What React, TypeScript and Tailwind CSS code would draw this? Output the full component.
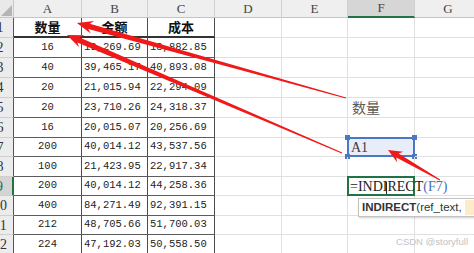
import React from "react";

// column widths of the sheet, A..G
const columns = [
  { key: "A", w: "w-[68px]" },
  { key: "B", w: "w-[66px]" },
  { key: "C", w: "w-[67px]" },
  { key: "D", w: "w-[67px]" },
  { key: "E", w: "w-[66px]" },
  { key: "F", w: "w-[67px]" },
  { key: "G", w: "w-[67px]" },
];

const rows = [
  ["数量", "金额", "成本"],
  ["16", "19,269.69", "18,882.85"],
  ["40", "39,465.17", "40,893.08"],
  ["20", "21,015.94", "22,294.09"],
  ["20", "23,710.26", "24,318.37"],
  ["16", "20,015.07", "20,256.69"],
  ["200", "40,014.12", "43,537.56"],
  ["100", "21,423.95", "22,917.34"],
  ["200", "40,014.12", "44,258.36"],
  ["400", "84,271.49", "92,391.15"],
  ["212", "48,705.66", "51,700.03"],
  ["224", "47,192.03", "50,558.50"],
];

const rowHeights = [20, 20, 20, 20, 20, 20, 19, 20, 19, 20, 19, 20];

// tapered arrow with swept-back barbs, tail -> tip
function arrowPoints(
  tx: number,
  ty: number,
  hx: number,
  hy: number,
  w0: number,
  w1: number,
  headLen: number,
  headW: number
) {
  const dx = hx - tx;
  const dy = hy - ty;
  const len = Math.hypot(dx, dy);
  const ux = dx / len;
  const uy = dy / len;
  const nx = -uy;
  const ny = ux;
  const bx = hx - ux * headLen;
  const by = hy - uy * headLen;
  const jx = hx - ux * headLen * 0.78;
  const jy = hy - uy * headLen * 0.78;
  const pts = [
    [tx + (nx * w0) / 2, ty + (ny * w0) / 2],
    [jx + (nx * w1) / 2, jy + (ny * w1) / 2],
    [bx + (nx * headW) / 2, by + (ny * headW) / 2],
    [hx, hy],
    [bx - (nx * headW) / 2, by - (ny * headW) / 2],
    [jx - (nx * w1) / 2, jy - (ny * w1) / 2],
    [tx - (nx * w0) / 2, ty - (ny * w0) / 2],
  ];
  return pts.map((p) => `${p[0].toFixed(1)},${p[1].toFixed(1)}`).join(" ");
}

function Arrows() {
  return (
    <svg
      className="absolute inset-0 z-30 pointer-events-none"
      width={474}
      height={253}
      viewBox="0 0 474 253"
    >
      <polygon points={arrowPoints(346, 98, 77, 23, 0.8, 5.5, 16, 13)} fill="#f01818" />
      <polygon points={arrowPoints(342, 153, 67, 35, 0.8, 5.5, 16, 13)} fill="#f01818" />
      <polygon points={arrowPoints(440, 180, 388, 150, 1, 4.5, 14, 12)} fill="#f01818" />
    </svg>
  );
}

function HeaderRow() {
  return (
    <div className="flex h-[18px]">
      <div className="relative w-[27px] -ml-[13px] shrink-0 bg-[#e9e9e9] border-r border-b border-[#c8c8c8]">
        <div className="absolute right-[1px] bottom-[1px] w-0 h-0 border-l-[11px] border-l-transparent border-b-[11px] border-b-[#b5b5b5]" />
      </div>
      {columns.map((c) => (
        <div
          key={c.key}
          className={`${c.w} shrink-0 flex items-center justify-center font-['Liberation_Serif',serif] text-[13px] text-[#444] border-r border-[#d0d0d0] ${
            c.key === "F"
              ? "bg-[#d6d6d6] border-b-2 border-b-[#217346]"
              : "bg-[#efefef] border-b border-b-[#c4c4c4]"
          }`}
        >
          {c.key}
        </div>
      ))}
    </div>
  );
}

function ExtraCell({ r, col }: { r: number; col: string }) {
  if (col === "F" && r === 5) {
    return (
      <span className="pl-[4px] font-['Noto_Sans_CJK_SC',sans-serif] text-[14px] text-[#5a5a5a]">
        数量
      </span>
    );
  }
  if (col === "F" && r === 7) {
    return (
      <>
        <div className="absolute -inset-[1px] bg-[#e8eef9] border-2 border-[#4a78c2]" />
        <div className="absolute -left-[3px] -top-[3px] w-[5px] h-[5px] bg-[#4a78c2]" />
        <div className="absolute -right-[3px] -top-[3px] w-[5px] h-[5px] bg-[#4a78c2]" />
        <div className="absolute -left-[3px] -bottom-[3px] w-[5px] h-[5px] bg-[#4a78c2]" />
        <div className="absolute -right-[3px] -bottom-[3px] w-[5px] h-[5px] bg-[#4a78c2]" />
        <span className="relative pl-[3px] font-['Liberation_Serif',serif] text-[14px] text-[#3c3c3c]">
          A1
        </span>
      </>
    );
  }
  if (col === "F" && r === 9) {
    return (
      <>
        <div className="absolute -inset-[1px] border-2 border-[#217346]" />
        <span className="relative z-10 pl-[2px] whitespace-nowrap font-['Liberation_Serif',serif] text-[14px] text-[#222]">
          =INDIRECT<span className="text-[#4a6fb5]">(F7)</span>
        </span>
        {/* text caret */}
        <div className="absolute left-[38px] top-[5px] w-px h-[12px] bg-[#222] z-10" />
        {/* function hint */}
        <div className="absolute left-[10px] top-[21px] z-20 h-[19px] flex items-center bg-white border border-[#c2c2c2] shadow-[1px_1px_2px_rgba(0,0,0,0.2)] pl-[3px] whitespace-nowrap font-['Liberation_Sans',sans-serif] text-[11.5px] text-[#333]">
          <b>INDIRECT</b>(ref_text,
          <span className="ml-[3px] w-[12px] h-[15px] bg-[#fdeccb]" />
        </div>
      </>
    );
  }
  return null;
}

function DataRow({ r, cells, h }: { r: number; cells: string[]; h: number }) {
  const hClass = h === 20 ? "h-[20px]" : "h-[19px]";
  const selectedRow = r === 9;
  return (
    <div className={`flex ${hClass}`}>
      <div
        className={`w-[27px] -ml-[13px] shrink-0 flex items-center justify-center font-['Liberation_Serif',serif] text-[14px] border-b border-[#cfcfcf] ${
          selectedRow
            ? "bg-[#d4d4d4] text-[#2f6a45] border-r-2 border-r-[#217346]"
            : "bg-[#ececec] text-[#333] border-r border-r-[#555]"
        }`}
      >
        {r}
      </div>
      {columns.map((c, ci) => {
        if (ci < 3) {
          const v = cells[ci];
          const head = r === 1;
          return (
            <div
              key={c.key}
              className={`${c.w} shrink-0 flex items-center border-r border-[#4d4d4d] ${
                head ? "border-b-2 border-b-[#333]" : "border-b border-b-[#5c5c5c]"
              } ${ci === 0 || head ? "justify-center" : "justify-start pl-[2px]"} ${
                head
                  ? "font-['Noto_Sans_CJK_SC',sans-serif] font-bold text-[13px] text-[#111]"
                  : "font-['Liberation_Mono',monospace] text-[10.5px] text-[#222]"
              }`}
            >
              {v}
            </div>
          );
        }
        return (
          <div
            key={c.key}
            className={`${c.w} shrink-0 relative flex items-center border-r border-b border-[#e0e0e0]`}
          >
            <ExtraCell r={r} col={c.key} />
          </div>
        );
      })}
    </div>
  );
}

export default function App() {
  return (
    <div className="relative w-[474px] h-[253px] overflow-hidden bg-white">
      <div className="flex flex-col">
        <HeaderRow />
        {rows.map((cells, i) => (
          <DataRow key={i} r={i + 1} cells={cells} h={rowHeights[i]} />
        ))}
      </div>
      <div className="absolute right-[6px] bottom-[4px] z-20 font-['Liberation_Sans',sans-serif] text-[9.5px] text-[#c2c2c2]">
        CSDN @storyfull
      </div>
      <Arrows />
    </div>
  );
}
